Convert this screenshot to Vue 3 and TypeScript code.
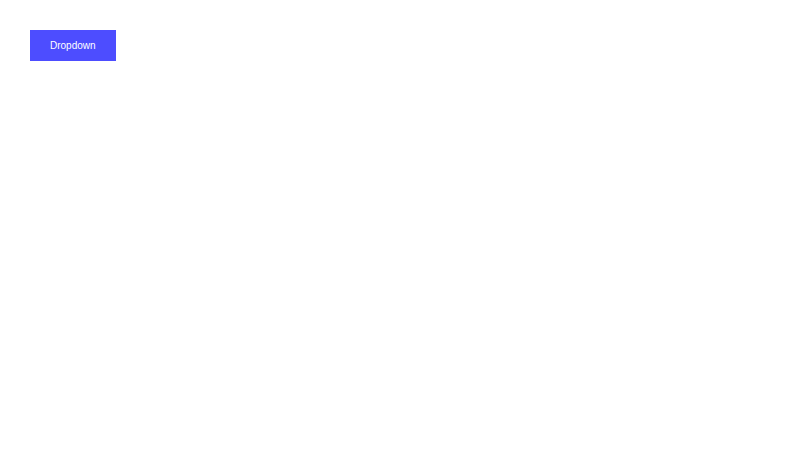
<script setup lang="ts">
import { ref } from 'vue'

const open = ref<boolean>(false)
</script>

<template>
  <main class="page">
    <button class="dropdown" type="button" :aria-expanded="open" @click="open = !open">Dropdown</button>
  </main>
</template>

<style scoped>
.page {
  display: flex;
  padding: 30px;
}

.dropdown {
  padding: 10px 20px;
  border: 0;
  background: #4d4dff;
  color: #fff;
  font-family: "Liberation Sans", Arial, sans-serif;
  font-size: 10px;
  line-height: 11px;
  cursor: pointer;
}
</style>

<style>
body {
  background: #fff;
}
</style>
